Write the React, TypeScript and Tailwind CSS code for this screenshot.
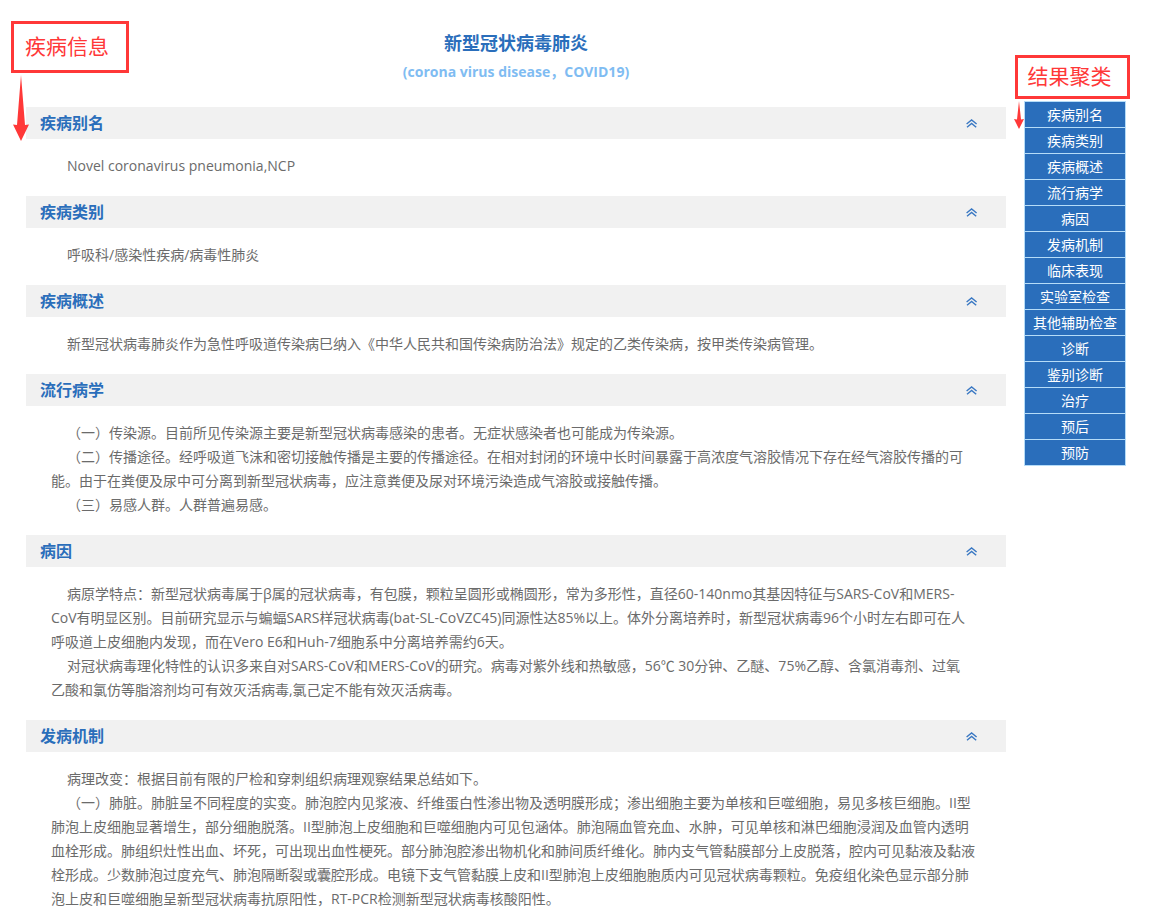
import { useState } from 'react';

type Section = { id: string; title: string; paragraphs: string[] };

const sections: Section[] = [
  { id: 'alias', title: '疾病别名', paragraphs: ['Novel coronavirus pneumonia,NCP'] },
  { id: 'category', title: '疾病类别', paragraphs: ['呼吸科/感染性疾病/病毒性肺炎'] },
  {
    id: 'overview',
    title: '疾病概述',
    paragraphs: [
      '新型冠状病毒肺炎作为急性呼吸道传染病巳纳入《中华人民共和国传染病防治法》规定的乙类传染病，按甲类传染病管理。',
    ],
  },
  {
    id: 'epidemiology',
    title: '流行病学',
    paragraphs: [
      '（一）传染源。目前所见传染源主要是新型冠状病毒感染的患者。无症状感染者也可能成为传染源。',
      '（二）传播途径。经呼吸道飞沫和密切接触传播是主要的传播途径。在相对封闭的环境中长时间暴露于高浓度气溶胶情况下存在经气溶胶传播的可能。由于在粪便及尿中可分离到新型冠状病毒，应注意粪便及尿对环境污染造成气溶胶或接触传播。',
      '（三）易感人群。人群普遍易感。',
    ],
  },
  {
    id: 'etiology',
    title: '病因',
    paragraphs: [
      '病原学特点：新型冠状病毒属于β属的冠状病毒，有包膜，颗粒呈圆形或椭圆形，常为多形性，直径60-140nmo其基因特征与SARS-CoV和MERS-\nCoV有明显区别。目前研究显示与蝙蝠SARS样冠状病毒(bat-SL-CoVZC45)同源性达85%以上。体外分离培养时，新型冠状病毒96个小时左右即可在人\n呼吸道上皮细胞内发现，而在Vero E6和Huh-7细胞系中分离培养需约6天。',
      '对冠状病毒理化特性的认识多来自对SARS-CoV和MERS-CoV的研究。病毒对紫外线和热敏感，56℃ 30分钟、乙醚、75%乙醇、含氯消毒剂、过氧\n乙酸和氯仿等脂溶剂均可有效灭活病毒,氯己定不能有效灭活病毒。',
    ],
  },
  {
    id: 'pathogenesis',
    title: '发病机制',
    paragraphs: [
      '病理改变：根据目前有限的尸检和穿刺组织病理观察结果总结如下。',
      '（一）肺脏。肺脏呈不同程度的实变。肺泡腔内见浆液、纤维蛋白性渗出物及透明膜形成；渗出细胞主要为单核和巨噬细胞，易见多核巨细胞。II型肺泡上皮细胞显著增生，部分细胞脱落。II型肺泡上皮细胞和巨噬细胞内可见包涵体。肺泡隔血管充血、水肿，可见单核和淋巴细胞浸润及血管内透明血栓形成。肺组织灶性出血、坏死，可出现出血性梗死。部分肺泡腔渗出物机化和肺间质纤维化。肺内支气管黏膜部分上皮脱落，腔内可见黏液及黏液栓形成。少数肺泡过度充气、肺泡隔断裂或囊腔形成。电镜下支气管黏膜上皮和II型肺泡上皮细胞胞质内可见冠状病毒颗粒。免疫组化染色显示部分肺泡上皮和巨噬细胞呈新型冠状病毒抗原阳性，RT-PCR检测新型冠状病毒核酸阳性。',
    ],
  },
];

const navItems = [
  '疾病别名',
  '疾病类别',
  '疾病概述',
  '流行病学',
  '病因',
  '发病机制',
  '临床表现',
  '实验室检查',
  '其他辅助检查',
  '诊断',
  '鉴别诊断',
  '治疗',
  '预后',
  '预防',
];

function DoubleChevron({ open }: { open: boolean }) {
  return (
    <svg
      viewBox="0 0 12 10"
      className={open ? 'h-[10px] w-3' : 'h-[10px] w-3 rotate-180'}
      fill="none"
      stroke="#3a78c3"
      strokeWidth="1.4"
      aria-hidden="true"
    >
      <path d="M0.6 6 L5.6 2 L10.6 6" />
      <path d="M1 9.2 L5.6 5.4 L10.2 9.2" />
    </svg>
  );
}

function Panel({ section }: { section: Section }) {
  const [open, setOpen] = useState(true);
  return (
    <section id={section.id}>
      <h2>
        <button
          type="button"
          aria-expanded={open}
          onClick={() => setOpen(!open)}
          className="flex h-8 w-full items-center justify-between bg-[#f1f1f1] pr-7 pl-[14px] text-base font-bold text-[#2a6ebb]"
        >
          {section.title}
          <DoubleChevron open={open} />
        </button>
      </h2>
      {open && (
        <div className="pt-[15px] pr-6 pb-[18px] pl-[25px] text-sm leading-6 text-[#6b6b6b]">
          {section.paragraphs.map((p) => (
            <p key={p} className="indent-4 whitespace-pre-line">
              {p}
            </p>
          ))}
        </div>
      )}
    </section>
  );
}

export default function App() {
  return (
    <div
      className="relative flex items-start gap-[18px] bg-white pr-[39px] pl-[26px] font-['Open_Sans','Noto_Sans_CJK_SC',sans-serif] [text-spacing-trim:space-all]"
      lang="zh-CN"
    >
      <main className="min-w-0 flex-1">
        <header className="pt-[29px] pb-[21px] text-center font-bold">
          <h1 className="text-lg leading-7 text-[#2a6ebb]">新型冠状病毒肺炎</h1>
          <p className="pt-[1px] text-sm leading-7 text-[#7fbcf2]">(corona virus disease，COVID19)</p>
        </header>
        {sections.map((s) => (
          <Panel key={s.id} section={s} />
        ))}
      </main>

      <aside className="relative w-[102px] shrink-0 pt-[101px]">
        <nav aria-label="结果聚类" className="border border-b-0 border-[#b5dcf8]">
          {navItems.map((item, i) => (
            <a
              key={item}
              href={'#' + (sections[i]?.id ?? item)}
              className="block h-[26px] border-b border-[#b5dcf8] bg-[#2a6ebb] text-center text-sm leading-[25px] text-white"
            >
              {item}
            </a>
          ))}
        </nav>
        <div className="absolute top-[55px] right-[-4px] flex h-11 w-[115px] items-center justify-center border-3 border-[#ff3838] pr-1.5 text-[21px] whitespace-nowrap text-[#ff3838]">
          结果聚类
        </div>
        <svg viewBox="0 0 10 28" className="absolute top-[101px] left-[-10px] h-7 w-[10px]" fill="#ff3838" aria-hidden="true">
          <path d="M5 0 L7 18.5 L10 18 L5 28 L0 18 L3 18.5 Z" />
        </svg>
      </aside>

      <div className="absolute top-[21px] left-[11px] flex h-[52px] w-[118px] items-center justify-center border-3 border-[#ff3838] pr-1.5 text-[21px] whitespace-nowrap text-[#ff3838]">
        疾病信息
      </div>
      <svg viewBox="0 0 16 66" className="absolute top-[75px] left-[13px] h-[66px] w-4" fill="#ff3838" aria-hidden="true">
        <path d="M8 0 L12 50 L16 49.5 L8 66 L0 49.5 L4 50 Z" />
      </svg>
    </div>
  );
}
